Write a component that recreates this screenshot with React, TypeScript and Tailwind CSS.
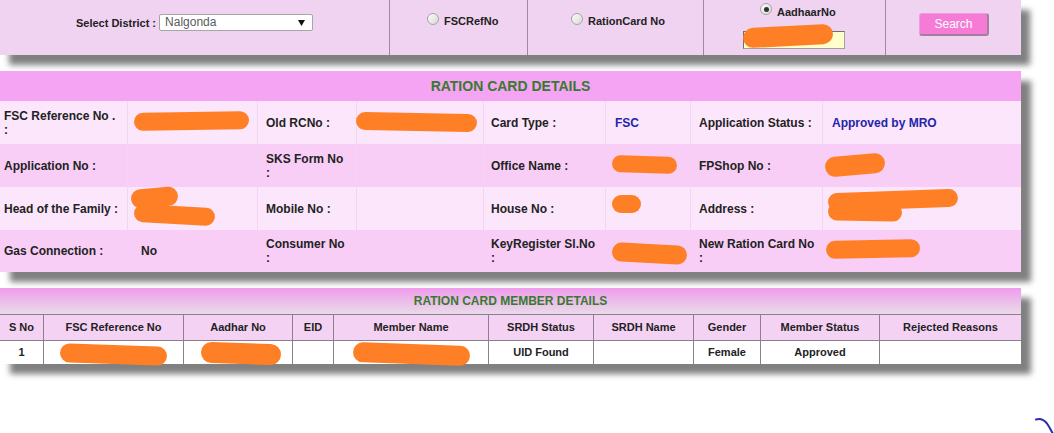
import React from "react";

const ORANGE = "#ff7f27";

type Blob = { x: number; y: number; w: number; h: number; r: number };

const blobs: Blob[] = [
  { x: 134, y: 112, w: 115, h: 18, r: -1 },
  { x: 356, y: 113, w: 121, h: 18, r: 1 },
  { x: 612, y: 156, w: 65, h: 17, r: 2 },
  { x: 825, y: 155, w: 60, h: 20, r: -5 },
  { x: 131, y: 188, w: 47, h: 19, r: -5 },
  { x: 134, y: 206, w: 81, h: 18, r: 3 },
  { x: 612, y: 195, w: 29, h: 18, r: 0 },
  { x: 828, y: 191, w: 130, h: 18, r: -2 },
  { x: 828, y: 203, w: 74, h: 18, r: 1 },
  { x: 612, y: 244, w: 75, h: 19, r: 3 },
  { x: 826, y: 240, w: 94, h: 18, r: -1 },
  { x: 743, y: 26, w: 90, h: 20, r: -3 },
  { x: 60, y: 345, w: 107, h: 19, r: 2 },
  { x: 201, y: 343, w: 80, h: 21, r: 2 },
  { x: 353, y: 344, w: 117, h: 20, r: 2 },
];

function Radio({ checked }: { checked?: boolean }) {
  return (
    <span className="relative inline-flex w-[12px] h-[12px] shrink-0 rounded-full border border-[#a4a4a4] bg-gradient-to-br from-[#fcfcfc] to-[#d9d9d9] items-center justify-center">
      {checked ? <span className="w-[5px] h-[5px] rounded-full bg-[#333]" /> : null}
    </span>
  );
}

type Cell = { label: string[]; value?: string; blue?: boolean };

const rows: Cell[][] = [
  [
    { label: ["FSC Reference No .", ":"] },
    { label: ["Old RCNo :"] },
    { label: ["Card Type :"], value: "FSC", blue: true },
    { label: ["Application Status :"], value: "Approved by MRO", blue: true },
  ],
  [
    { label: ["Application No :"] },
    { label: ["SKS Form No", ":"] },
    { label: ["Office Name :"] },
    { label: ["FPShop No :"] },
  ],
  [
    { label: ["Head of the Family :"] },
    { label: ["Mobile No :"] },
    { label: ["House No :"] },
    { label: ["Address :"] },
  ],
  [
    { label: ["Gas Connection :"], value: "No" },
    { label: ["Consumer No", ":"] },
    { label: ["KeyRegister Sl.No", ":"] },
    { label: ["New Ration Card No", ":"] },
  ],
];

const labelPad = ["pl-[4px] pr-[8px]", "pl-[8px] pr-[8px]", "pl-[7px] pr-[7px]", "pl-[8px] pr-[8px]"];
const valuePad = ["pl-[13px]", "pl-[8px]", "pl-[9px]", "pl-[9px]"];
const rowH = ["h-[43px]", "h-[43px]", "h-[43px]", "h-[42px]"];

const memberHeads = [
  "S No",
  "FSC Reference No",
  "Aadhar No",
  "EID",
  "Member Name",
  "SRDH Status",
  "SRDH Name",
  "Gender",
  "Member Status",
  "Rejected Reasons",
];
const memberRow = ["1", "", "", "", "", "UID Found", "", "Female", "Approved", ""];

export default function App() {
  return (
    <div className="relative w-[1054px] h-[433px] overflow-hidden bg-white font-['Liberation_Sans',Arial,sans-serif] text-[#222]">
      <div className="w-[1021px] flex flex-col gap-[16px]">
        {/* Top search panel */}
        <div className="h-[55px] bg-[#f0d3f0] flex shadow-[9px_10px_6px_#808080]">
          <div className="w-[389px] flex justify-center pt-[14px]">
            <div className="flex items-center h-[17px]">
              <span className="text-[11px] font-bold leading-[17px] mt-[1px]">Select District :</span>
              <div className="ml-[3px] w-[154px] h-[17px] bg-white border border-[#a6a6a6] rounded-[2px] flex items-center justify-between pl-[5px] pr-[7px]">
                <span className="text-[12px] leading-[15px] text-[#5a5a5a]">Nalgonda</span>
                <svg width="7" height="6" viewBox="0 0 7 6">
                  <path d="M0 0 H7 L3.5 6 Z" fill="#111" />
                </svg>
              </div>
            </div>
          </div>
          <div className="w-[138px] border-l border-[#9b8b9b] flex items-start pl-[37px] pt-[13px]">
            <Radio />
            <span className="ml-[5px] mt-[1px] text-[11px] font-bold leading-[14px]">FSCRefNo</span>
          </div>
          <div className="w-[176px] border-l border-[#9b8b9b] flex items-start pl-[43px] pt-[13px]">
            <Radio />
            <span className="ml-[5px] mt-[1px] text-[11px] font-bold leading-[14px]">RationCard No</span>
          </div>
          <div className="w-[182px] border-l border-[#9b8b9b] flex flex-col items-start pt-[3px]">
            <div className="flex items-start pl-[56px]">
              <Radio checked />
              <span className="ml-[5px] mt-[2px] text-[11px] font-bold leading-[14px]">AadhaarNo</span>
            </div>
            <div className="ml-[39px] mt-[12px] w-[102px] h-[18px] bg-[#ffffcc] border border-[#a0a0a0] border-t-[#6f6f6f] border-l-[#6f6f6f]" />
          </div>
          <div className="w-[136px] border-l border-[#9b8b9b] pl-[33px] pt-[13px]">
            <div className="w-[70px] h-[23px] rounded-[3px] bg-[#f57bd7] border border-[#e99ddc] border-r-2 border-b-2 border-r-[#a27fa0] border-b-[#a27fa0] flex items-center justify-center">
              <span className="text-[12px] leading-[14px] text-white">Search</span>
            </div>
          </div>
        </div>

        {/* Ration card details */}
        <div className="flex flex-col shadow-[10px_10px_6px_#808080]">
          <div className="h-[30px] bg-[#f5a4f3] flex items-center justify-center">
            <span className="text-[14px] font-bold text-[#377a2e] leading-[16px]">RATION CARD DETAILS</span>
          </div>
          {rows.map((row, ri) => (
            <div
              key={ri}
              className={`grid grid-cols-[128px_130px_99px_127px_122px_85px_132px_198px] ${rowH[ri]} ${
                ri % 2 === 0 ? "bg-[#fce6fc]" : "bg-[#f8cef7]"
              }`}
            >
              {row.map((c, ci) => {
                const sep = ri < 3 ? "border-r border-[#f3d4f2]" : "";
                return (
                  <React.Fragment key={ci}>
                    <div className={`flex items-center ${labelPad[ci]} ${sep}`}>
                      <span className="text-[12px] font-bold leading-[14px]">
                        {c.label.map((l, li) => (
                          <React.Fragment key={li}>
                            {li > 0 ? <br /> : null}
                            {l}
                          </React.Fragment>
                        ))}
                      </span>
                    </div>
                    <div className={`flex items-center ${valuePad[ci]} ${ci < 3 ? sep : ""}`}>
                      {c.value ? (
                        <span
                          className={`text-[12px] font-bold leading-[14px] ${
                            c.blue ? "text-[#2424a8]" : "text-[#222]"
                          }`}
                        >
                          {c.value}
                        </span>
                      ) : null}
                    </div>
                  </React.Fragment>
                );
              })}
            </div>
          ))}
        </div>

        {/* Member details */}
        <div className="flex flex-col shadow-[10px_10px_6px_#808080]">
          <div className="h-[26px] bg-gradient-to-b from-[#ef9bec] to-[#e8dbe8] flex items-center justify-center">
            <span className="text-[12px] font-bold text-[#377a2e] leading-[14px]">RATION CARD MEMBER DETAILS</span>
          </div>
          <div className="grid grid-cols-[44px_140px_109px_41px_155px_105px_100px_67px_119px_141px] h-[26px] bg-[#f4d2f4] border-t border-[#8e7e8e]">
            {memberHeads.map((h, i) => (
              <div
                key={i}
                className={`flex items-center justify-center ${i < 9 ? "border-r border-[#8e7e8e]" : ""}`}
              >
                <span className="text-[11px] font-bold leading-[13px]">{h}</span>
              </div>
            ))}
          </div>
          <div className="grid grid-cols-[44px_140px_109px_41px_155px_105px_100px_67px_119px_141px] h-[24px] bg-white border-t border-[#8e7e8e]">
            {memberRow.map((v, i) => (
              <div
                key={i}
                className={`flex items-center justify-center ${i < 9 ? "border-r border-[#8e7e8e]" : ""}`}
              >
                <span className="text-[11px] font-bold leading-[13px]">{v}</span>
              </div>
            ))}
          </div>
        </div>
      </div>

      {/* Redaction marks (overlay) */}
      {blobs.map((b, i) => (
        <div
          key={i}
          className="absolute rounded-full"
          style={{
            left: b.x,
            top: b.y,
            width: b.w,
            height: b.h,
            background: ORANGE,
            transform: `rotate(${b.r}deg)`,
          }}
        />
      ))}

      {/* Pen scribble */}
      <svg className="absolute left-[1030px] top-[412px]" width="24" height="21" viewBox="0 0 24 21">
        <path
          d="M6 7.5 C10 6.3 14 7.8 17 11.5 C19 14.5 21 18 22.5 21"
          stroke="#2a2ab0"
          strokeWidth="2"
          fill="none"
          strokeLinecap="round"
        />
      </svg>
    </div>
  );
}
